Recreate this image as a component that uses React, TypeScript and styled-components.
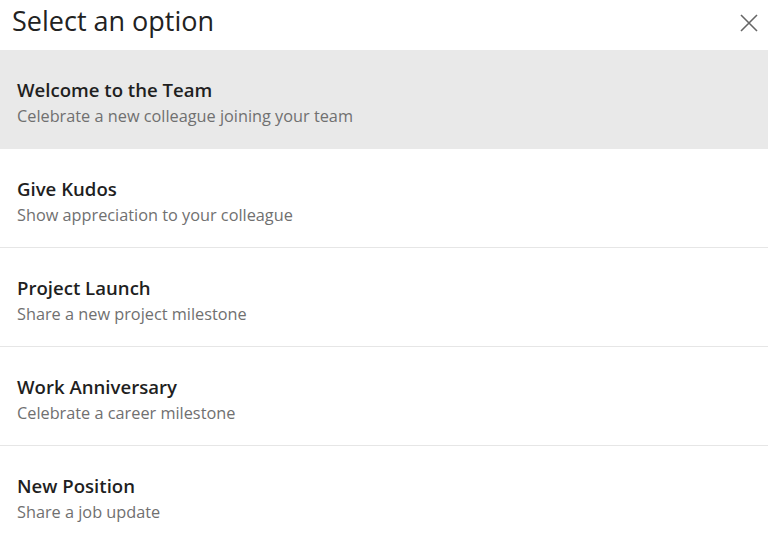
import React, { useState } from "react";
import styled, { createGlobalStyle } from "styled-components";

const options = [
    { title: "Welcome to the Team", desc: "Celebrate a new colleague joining your team" },
    { title: "Give Kudos", desc: "Show appreciation to your colleague" },
    { title: "Project Launch", desc: "Share a new project milestone" },
    { title: "Work Anniversary", desc: "Celebrate a career milestone" },
    { title: "New Position", desc: "Share a job update" },
];

const App: React.FC = () => {
    const [active, setActive] = useState(0);

    return (
        <>
            <GlobalStyle />
            <Panel>
                <Header>
                    <Title>Select an option</Title>
                    <CloseButton aria-label="Close">
                        <svg width="20" height="20" viewBox="0 0 20 20">
                            <path d="M2 2 L18 18 M18 2 L2 18" stroke="#666" strokeWidth="1.6" fill="none" />
                        </svg>
                    </CloseButton>
                </Header>
                <OptionList>
                    {options.map((option, index) => (
                        <OptionRow key={option.title} $active={index === active} onClick={() => setActive(index)}>
                            <OptionTitle>{option.title}</OptionTitle>
                            <OptionDesc>{option.desc}</OptionDesc>
                        </OptionRow>
                    ))}
                </OptionList>
            </Panel>
        </>
    );
};

const GlobalStyle = createGlobalStyle`
  body {
    margin: 0;
    background: #fff;
    font-family: "Open Sans", "Noto Sans", sans-serif;
  }
`;

const Panel = styled.div`
  width: 768px;
  display: flex;
  flex-direction: column;
`;

const Header = styled.div`
  height: 50px;
  display: flex;
  align-items: center;
  justify-content: space-between;
  padding: 0 8px 0 12px;
  box-sizing: border-box;
`;

const Title = styled.h1`
  margin: -9px 0 0;
  font-size: 27px;
  font-weight: 400;
  color: #222;
`;

const CloseButton = styled.button`
  border: none;
  background: transparent;
  padding: 0;
  width: 24px;
  height: 24px;
  display: flex;
  align-items: center;
  justify-content: center;
  cursor: pointer;
  margin-top: -4px;
  margin-right: -1px;
`;

const OptionList = styled.div`
  display: flex;
  flex-direction: column;
`;

const OptionRow = styled.div<{ $active: boolean }>`
  height: 99px;
  box-sizing: border-box;
  padding: 27px 17px 0;
  display: flex;
  flex-direction: column;
  background: ${(p) => (p.$active ? "#e9e9e9" : "#fff")};
  border-bottom: 1px solid ${(p) => (p.$active ? "#e9e9e9" : "#e6e6e6")};
  cursor: pointer;
`;

const OptionTitle = styled.div`
  font-size: 18.6px;
  font-weight: 600;
  color: #1f1f1f;
  line-height: 26px;
`;

const OptionDesc = styled.div`
  font-size: 16.3px;
  color: #707070;
  line-height: 26px;
`;

export default App;
